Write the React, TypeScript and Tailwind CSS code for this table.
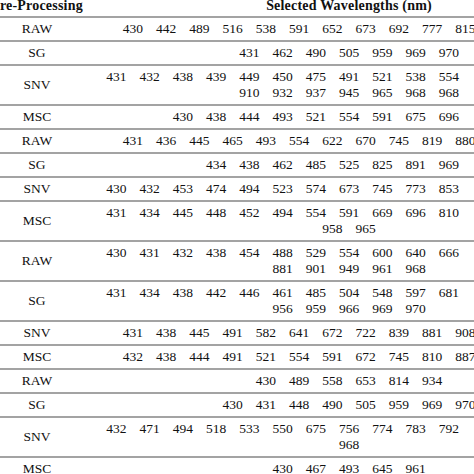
import React from 'react';

type Row = { label: string; lines: number[][] };

// 0 = posição além da borda direita (só ocupa espaço para a centralização)
const rows: Row[] = [
  { label: 'RAW', lines: [[430, 442, 489, 516, 538, 591, 652, 673, 692, 777, 815, 0, 0, 0]] },
  { label: 'SG', lines: [[431, 462, 490, 505, 959, 969, 970]] },
  {
    label: 'SNV',
    lines: [
      [431, 432, 438, 439, 449, 450, 475, 491, 521, 538, 554, 0, 0, 0, 0],
      [910, 932, 937, 945, 965, 968, 968],
    ],
  },
  { label: 'MSC', lines: [[430, 438, 444, 493, 521, 554, 591, 675, 696, 0, 0]] },
  { label: 'RAW', lines: [[431, 436, 445, 465, 493, 554, 622, 670, 745, 819, 880, 0, 0, 0]] },
  { label: 'SG', lines: [[434, 438, 462, 485, 525, 825, 891, 969, 0]] },
  { label: 'SNV', lines: [[430, 432, 453, 474, 494, 523, 574, 673, 745, 773, 853, 0, 0, 0, 0]] },
  {
    label: 'MSC',
    lines: [
      [431, 434, 445, 448, 452, 494, 554, 591, 669, 696, 810, 0, 0, 0, 0],
      [958, 965],
    ],
  },
  {
    label: 'RAW',
    lines: [
      [430, 431, 432, 438, 454, 488, 529, 554, 600, 640, 666, 0, 0, 0, 0],
      [881, 901, 949, 961, 968],
    ],
  },
  {
    label: 'SG',
    lines: [
      [431, 434, 438, 442, 446, 461, 485, 504, 548, 597, 681, 0, 0, 0, 0],
      [956, 959, 966, 969, 970],
    ],
  },
  { label: 'SNV', lines: [[431, 438, 445, 491, 582, 641, 672, 722, 839, 881, 908, 0, 0, 0]] },
  { label: 'MSC', lines: [[432, 438, 444, 491, 521, 554, 591, 672, 745, 810, 887, 0, 0, 0]] },
  { label: 'RAW', lines: [[430, 489, 558, 653, 814, 934]] },
  { label: 'SG', lines: [[430, 431, 448, 490, 505, 959, 969, 970]] },
  {
    label: 'SNV',
    lines: [
      [432, 471, 494, 518, 533, 550, 675, 756, 774, 783, 792, 0, 0, 0, 0],
      [968],
    ],
  },
  { label: 'MSC', lines: [[430, 467, 493, 645, 961]] },
];

const App: React.FC = () => {
  return (
    <div className="w-[474px] h-[474px] overflow-hidden bg-white">
      <div className="-ml-[13px] w-[624px] font-['Liberation_Serif',serif] text-[#111]">
        {/* cabeçalho, cortado no topo */}
        <div className="flex h-4 text-[14px] leading-[11px] font-bold tracking-[0.2px]">
          <div className="w-[100px] text-center whitespace-nowrap">Pre-Processing</div>
          <div className="flex-1 text-center whitespace-nowrap">Selected Wavelengths (nm)</div>
        </div>
        {rows.map((row, i) => (
          <div key={i} className="flex border-t-2 border-[#a3a3a3] py-[3px] text-[13.5px] leading-4">
            <div className="w-[100px] flex items-center justify-center">{row.label}</div>
            <div className="flex-1 flex flex-col items-center">
              {row.lines.map((line, j) => (
                <div key={j} className="flex gap-[13px] whitespace-nowrap">
                  {line.map((n, k) =>
                    n ? (
                      <span key={k}>{n}</span>
                    ) : (
                      <span key={k} className="invisible">000</span>
                    )
                  )}
                </div>
              ))}
            </div>
          </div>
        ))}
      </div>
    </div>
  );
};

export default App;
